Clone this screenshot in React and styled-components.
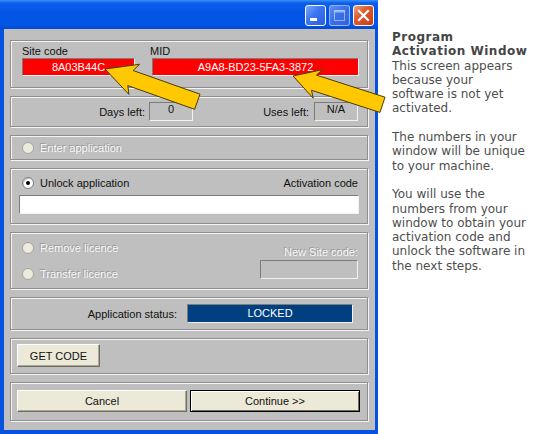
import React from "react";
import styled, { createGlobalStyle } from "styled-components";

const Global = createGlobalStyle`
  html, body { margin: 0; padding: 0; background: #ffffff; overflow: hidden; }
  * { box-sizing: border-box; }
`;

const Page = styled.div`
  position: relative;
  width: 540px;
  height: 434px;
  display: flex;
  font-family: "Liberation Sans", Arial, sans-serif;
`;

const Window = styled.div`
  width: 378px;
  height: 434px;
  display: flex;
  flex-direction: column;
  background: #0651dd;
`;

const TitleBar = styled.div`
  height: 29px;
  flex: 0 0 29px;
  display: flex;
  justify-content: flex-end;
  align-items: flex-start;
  padding: 5px 4px 0 0;
  gap: 2px;
  background: linear-gradient(180deg, #3d8ef6 0px, #0b60ea 3px, #0356e4 12px, #0457e6 24px, #0349d2 29px);
`;

const WinButton = styled.div`
  width: 21px;
  height: 21px;
  border-radius: 3px;
  border: 1px solid ${(p) => (p.$disabled ? "rgba(255,255,255,0.45)" : "#ffffff")};
  margin-left: ${(p) => p.$ml || 0}px;
  display: flex;
  align-items: center;
  justify-content: center;
  background: ${(p) =>
    p.$close
      ? "linear-gradient(135deg, #f0a080 0%, #e05a30 40%, #c83c14 100%)"
      : p.$disabled
      ? "linear-gradient(135deg, #5d8ff0 0%, #3a6ee6 50%, #2f62dc 100%)"
      : "linear-gradient(135deg, #7aa8ff 0%, #3c74f0 45%, #2a5ee2 100%)"};
`;

const Body = styled.div`
  flex: 1;
  margin: 0 3px 4px 4px;
  background: #bfbfbf;
  padding: 11px 7px 0 6px;
  display: flex;
  flex-direction: column;
  gap: 8px;
`;

const Group = styled.div`
  height: ${(p) => p.$h}px;
  flex: 0 0 ${(p) => p.$h}px;
  border: 1px solid #8e8e8e;
  box-shadow: inset 1px 1px 0 #f4f4f4, 1px 1px 0 #f4f4f4;
  padding: ${(p) => p.$pad || "0"};
  display: flex;
  flex-direction: ${(p) => p.$dir || "row"};
  align-items: ${(p) => p.$align || "stretch"};
  justify-content: ${(p) => p.$justify || "flex-start"};
  gap: ${(p) => p.$gap || 0}px;
`;

const Column = styled.div`
  display: flex;
  flex-direction: column;
  width: ${(p) => (p.$w ? `${p.$w}px` : "auto")};
  align-items: ${(p) => p.$align || "stretch"};
  padding-top: ${(p) => p.$pt || 0}px;
  gap: ${(p) => p.$gap || 0}px;
`;

const Label = styled.div`
  font-size: 11px;
  line-height: 14px;
  color: #101010;
  white-space: nowrap;
  margin-left: ${(p) => p.$ml || 0}px;
  text-align: ${(p) => (p.$right ? "right" : "left")};
  width: ${(p) => (p.$w ? `${p.$w}px` : "auto")};
  flex: none;
`;

const Disabled = styled.span`
  font-size: 11px;
  line-height: 14px;
  color: #f7f7f7;
  text-shadow: -1px -1px 0 #9a9a9a;
  white-space: nowrap;
`;

const Field = styled.div`
  height: ${(p) => p.$h || 19}px;
  width: ${(p) => (p.$w ? `${p.$w}px` : "auto")};
  flex: none;
  border: 1px solid;
  border-color: #7c7c7c #f2f2f2 #f2f2f2 #7c7c7c;
  background: ${(p) => p.$bg || "transparent"};
  color: ${(p) => p.$color || "#101010"};
  font-size: 11px;
  line-height: ${(p) => p.$lh || 13}px;
  text-align: center;
  white-space: nowrap;
  overflow: hidden;
`;

const Pair = styled.div`
  display: flex;
  align-items: center;
  justify-content: flex-end;
  gap: ${(p) => p.$gap || 4}px;
  flex: ${(p) => (p.$w ? `0 0 ${p.$w}px` : "1")};
`;

const RadioRow = styled.div`
  display: flex;
  align-items: center;
  height: 18px;
  gap: 6px;
`;

const Radio = styled.span`
  width: 12px;
  height: 12px;
  border-radius: 50%;
  flex: 0 0 12px;
  display: flex;
  align-items: center;
  justify-content: center;
  border: 1px solid ${(p) => (p.$disabled ? "#a4a4a4" : "#7a7a7a")};
  background: ${(p) => (p.$disabled ? "#ecebdc" : "#ffffff")};
  box-shadow: ${(p) => (p.$disabled ? "none" : "inset 1px 1px 0 #c8c8c8")};
  &::after {
    content: "";
    display: ${(p) => (p.$checked ? "block" : "none")};
    width: 4px;
    height: 4px;
    border-radius: 50%;
    background: #000;
  }
`;

const TopRow = styled.div`
  display: flex;
  align-items: center;
  justify-content: space-between;
  padding: 0 1px 0 3px;
  height: 18px;
`;

const Button = styled.div`
  width: ${(p) => p.$w}px;
  height: ${(p) => p.$h}px;
  background: #ece9d8;
  font-size: 11px;
  color: #101010;
  display: flex;
  align-items: center;
  justify-content: center;
  border: 1px solid;
  border-color: ${(p) => (p.$def ? "#000" : "#ffffff #6f6d62 #6f6d62 #ffffff")};
  box-shadow: ${(p) =>
    p.$def
      ? "inset 1px 1px 0 #ffffff, inset -1px -1px 0 #6f6d62"
      : "inset -1px -1px 0 #aca899"};
`;

const ButtonRow = styled.div`
  display: flex;
  gap: 3px;
`;

const Side = styled.div`
  margin-left: 14px;
  padding-top: 30px;
  font-family: "DejaVu Sans", Verdana, sans-serif;
  font-size: 12px;
  line-height: 14.3px;
  color: #4e4e4e;
  white-space: nowrap;
`;

const SideTitle = styled.div`
  font-weight: bold;
  color: #454545;
  letter-spacing: 0.5px;
`;

const Para = styled.div`
  margin-bottom: 14.3px;
`;

const Overlay = styled.svg`
  position: absolute;
  left: 0;
  top: 0;
  pointer-events: none;
`;

export default function App() {
  return (
    <Page>
      <Global />
      <Window>
        <TitleBar>
          <WinButton>
            <svg width="19" height="19" viewBox="0 0 19 19">
              <rect x="4" y="12" width="7" height="3" fill="#fff" />
            </svg>
          </WinButton>
          <WinButton $disabled $ml={1}>
            <svg width="19" height="19" viewBox="0 0 19 19">
              <rect x="4.5" y="4.5" width="10" height="10" fill="none" stroke="rgba(255,255,255,0.45)" strokeWidth="1" />
              <rect x="4.5" y="4.5" width="10" height="2" fill="rgba(255,255,255,0.45)" />
            </svg>
          </WinButton>
          <WinButton $close $ml={1}>
            <svg width="19" height="19" viewBox="0 0 19 19">
              <path d="M5 5 L14 14 M14 5 L5 14" stroke="#fff" strokeWidth="2.2" strokeLinecap="square" />
            </svg>
          </WinButton>
        </TitleBar>
        <Body>
          <Group $h={48} $pad="3px 8px 0 11px" $gap={17}>
            <Column $w={113}>
              <Label>Site code</Label>
              <Field $h={18} $bg="#ff0000" $color="#fff" $lh={16}>8A03B44C</Field>
            </Column>
            <Column $w={207}>
              <Label $ml={-2}>MID</Label>
              <Field $h={18} $bg="#ff0000" $color="#fff" $lh={16}>A9A8-BD23-5FA3-3872</Field>
            </Column>
          </Group>

          <Group $h={31} $align="center" $pad="0 9px 0 0">
            <Pair $w={182} $gap={4}>
              <Label>Days left:</Label>
              <Field $w={44}>0</Field>
            </Pair>
            <Pair $gap={5}>
              <Label>Uses left:</Label>
              <Field $w={44}>N/A</Field>
            </Pair>
          </Group>

          <Group $h={25} $align="center" $pad="0 0 0 11px">
            <RadioRow>
              <Radio $disabled />
              <Disabled>Enter application</Disabled>
            </RadioRow>
          </Group>

          <Group $h={56} $dir="column" $pad="5px 8px 0 8px" $gap={3}>
            <TopRow>
              <RadioRow>
                <Radio $checked />
                <Label>Unlock application</Label>
              </RadioRow>
              <Label>Activation code</Label>
            </TopRow>
            <Field $bg="#ffffff" />
          </Group>

          <Group $h={57} $justify="space-between" $pad="6px 9px 0 11px">
            <Column $gap={8}>
              <RadioRow>
                <Radio $disabled />
                <Disabled>Remove licence</Disabled>
              </RadioRow>
              <RadioRow>
                <Radio $disabled />
                <Disabled>Transfer licence</Disabled>
              </RadioRow>
            </Column>
            <Column $align="flex-end" $pt={6} $gap={1}>
              <Disabled>New Site code:</Disabled>
              <Field $w={98} />
            </Column>
          </Group>

          <Group $h={33} $align="center" $pad="0" $gap={10}>
            <Label $w={166} $right>Application status:</Label>
            <Field $w={166} $bg="#003f80" $color="#fff" $lh={17}>LOCKED</Field>
          </Group>

          <Group $h={36} $pad="5px 0 0 6px">
            <Button $w={83} $h={23}>GET CODE</Button>
          </Group>

          <Group $h={39} $pad="7px 0 0 6px">
            <ButtonRow>
              <Button $w={170} $h={22}>Cancel</Button>
              <Button $w={170} $h={22} $def>Continue &gt;&gt;</Button>
            </ButtonRow>
          </Group>
        </Body>
      </Window>

      <Side>
        <SideTitle>Program<br />Activation Window</SideTitle>
        <Para>This screen appears<br />because your<br />software is not yet<br />activated.</Para>
        <Para>The numbers in your<br />window will be unique<br />to your machine.</Para>
        <Para>You will use the<br />numbers from your<br />window to obtain your<br />activation code and<br />unlock the software in<br />the next steps.</Para>
      </Side>

      <Overlay width="540" height="434" viewBox="0 0 540 434">
        <polygon
          points="105,69 139.5,64.3 133.1,70.5 200,94.2 194.6,109.3 127.8,85.6 128.9,94.4"
          fill="#ffc800"
          stroke="#4a3c00"
          strokeWidth="1"
          strokeLinejoin="miter"
        />
        <polygon
          points="293,76 322.3,69.7 316.4,75.1 385,97.2 380,112.4 311.5,90.3 313.2,98.2"
          fill="#ffc800"
          stroke="#4a3c00"
          strokeWidth="1"
          strokeLinejoin="miter"
        />
      </Overlay>
    </Page>
  );
}
